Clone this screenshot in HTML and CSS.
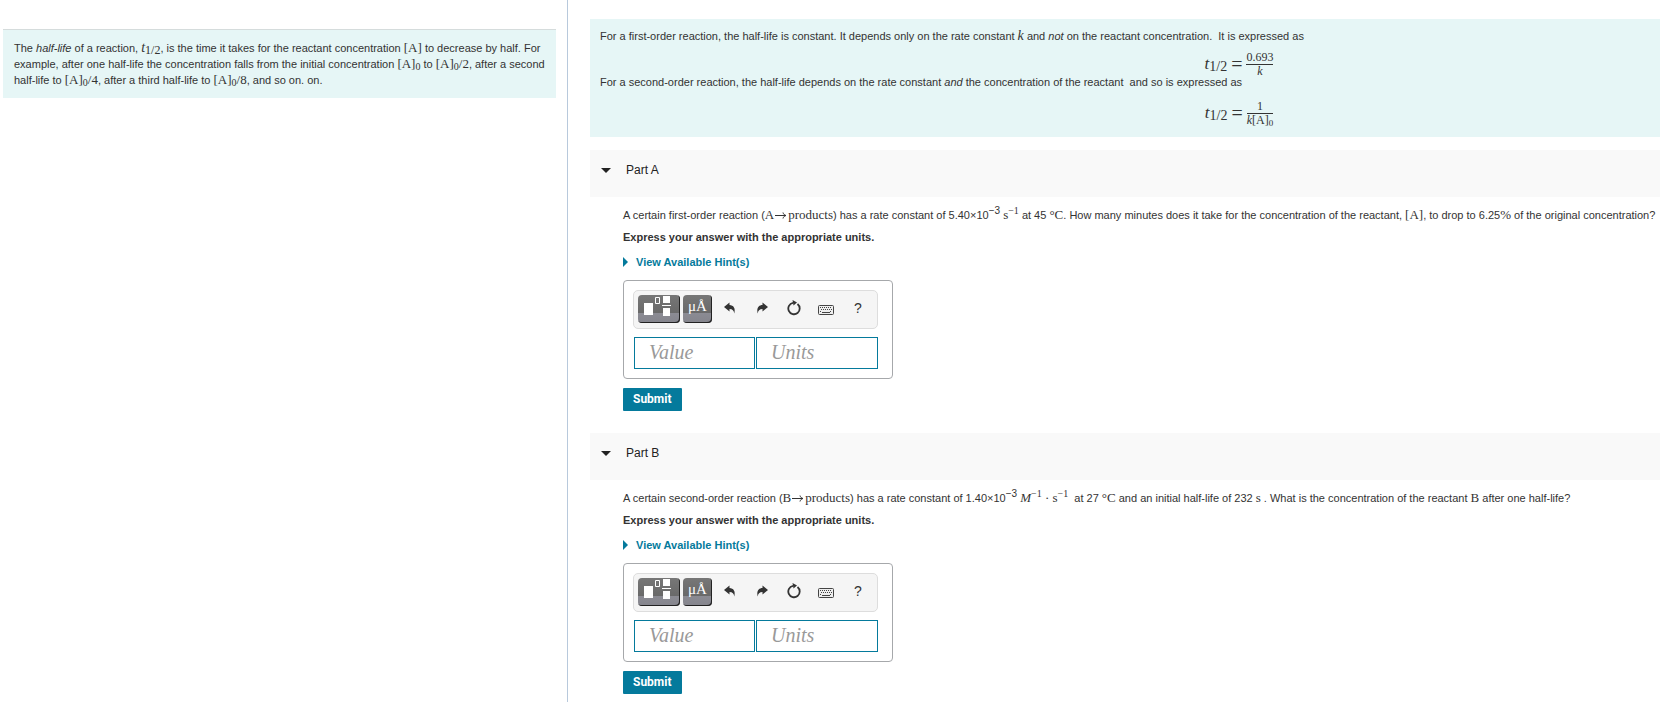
FILE: index.html
```html
<!DOCTYPE html>
<html lang="en">
<head>
  <meta charset="utf-8">
  <meta name="viewport" content="width=device-width">
  <title>Half-life</title>
  <link rel="stylesheet" href="styles.css">
</head>
<body>
  <!-- shared toolbar icons -->
  <svg class="defs" width="0" height="0" aria-hidden="true">
    <symbol id="i-templates" viewBox="0 0 42 28">
      <path fill="#fff" d="M6 8h9v12H6zM25 1h7v7h-7zM24 10h9v1h-9zM25 13h7v8h-7z"/>
      <path fill="none" stroke="#fff" d="M17.500 2.500h4v6h-4z"/>
    </symbol>
    <symbol id="i-undo" viewBox="0 0 12 12">
      <path fill="#333" d="M0 5L5.500 0.500V3C9.500 3 11.800 6.500 10.200 11.500C10 8.500 8.500 7 5.500 7V9.500Z"/>
    </symbol>
    <symbol id="i-reset" viewBox="0 0 14 16">
      <path fill="none" stroke="#333" stroke-width="1.800" d="M10.500 4A5.700 5.700 0 1 1 6 2.900"/>
      <path fill="#333" d="M5.500 0L10 2.500L6.500 5.500Z"/>
    </symbol>
    <symbol id="i-keyboard" viewBox="0 0 16 10">
      <rect x=".5" y=".5" width="15" height="9" rx="1" fill="#eee" stroke="#444"/>
      <path stroke="#444" stroke-dasharray="1 1" d="M2 2.500h12M3 4.500h11M2 6.500h2M12 6.500h2"/>
      <path stroke="#444" d="M4 7.500h8"/>
    </symbol>
  </svg>

  <div class="page">
    <aside class="side">
      <div class="note">
        The <i>half-life</i> of a reaction, <span class="m big"><i>t</i><sub>1/2</sub></span>, is the time it takes for the reactant concentration <span class="m">[A]</span> to decrease by half. For example, after one half-life the concentration falls from the initial concentration <span class="m">[A]<sub>0</sub></span> to <span class="m">[A]<sub>0</sub>/2</span>, after a second half-life to <span class="m">[A]<sub>0</sub>/4</span>, after a third half-life to <span class="m">[A]<sub>0</sub>/8</span>, and so on. on.
      </div>
    </aside>

    <main class="main">
      <div class="intro">
        <p>For a first-order reaction, the half-life is constant. It depends only on the rate constant <span class="m big"><i>k</i></span> and <i>not</i> on the reactant concentration.&nbsp; It is expressed as</p>
        <div class="eq">
          <span class="m lhs"><i>t</i><sub>1/2</sub></span><span class="m equals">=</span>
          <span class="m frac"><span class="num">0.693</span><span class="den"><i>k</i></span></span>
        </div>
        <p>For a second-order reaction, the half-life depends on the rate constant <i>and</i> the concentration of the reactant&nbsp; and so is expressed as</p>
        <div class="eq last">
          <span class="m lhs"><i>t</i><sub>1/2</sub></span><span class="m equals">=</span>
          <span class="m frac"><span class="num">1</span><span class="den"><i>k</i>[A]<sub>0</sub></span></span>
        </div>
      </div>

      <section class="part">
        <h2 class="part-head"><span class="caret"></span>Part A</h2>
        <div class="part-body">
          <p class="question">A certain first-order reaction (<span class="m">A<svg class="arrow" viewBox="0 0 12 7"><path d="M0 3.500h11M8 .5c.5 2 1.500 2.500 3 3c-1.500.5-2.500 1-3 3"/></svg>products</span>) has a rate constant of 5.40×10<sup>−3</sup> <span class="m">s<sup>−1</sup></span> at 45 <span class="m">°C</span>. How many minutes does it take for the concentration of the reactant, <span class="m">[A]</span>, to drop to 6.25<span class="m">%</span> of the original concentration?</p>
          <p class="express">Express your answer with the appropriate units.</p>
          <a class="hints" href="#">View Available Hint(s)</a>
          <div class="answer">
            <div class="tools">
              <button class="dark wide" type="button" aria-label="Templates"><svg width="42" height="28"><use href="#i-templates"/></svg></button>
              <button class="dark" type="button" aria-label="Symbols">μÅ</button>
              <button class="tool" type="button" aria-label="Undo"><svg width="12" height="12"><use href="#i-undo"/></svg></button>
              <button class="tool flip" type="button" aria-label="Redo"><svg width="12" height="12"><use href="#i-undo"/></svg></button>
              <button class="tool" type="button" aria-label="Reset"><svg width="14" height="16"><use href="#i-reset"/></svg></button>
              <button class="tool kbd" type="button" aria-label="Keyboard shortcuts"><svg width="16" height="10"><use href="#i-keyboard"/></svg></button>
              <button class="tool" type="button" aria-label="Help">?</button>
            </div>
            <div class="fields">
              <input type="text" placeholder="Value" aria-label="Value">
              <input type="text" placeholder="Units" aria-label="Units">
            </div>
          </div>
          <button class="submit" type="button">Submit</button>
        </div>
      </section>

      <section class="part">
        <h2 class="part-head"><span class="caret"></span>Part B</h2>
        <div class="part-body">
          <p class="question">A certain second-order reaction (<span class="m">B<svg class="arrow" viewBox="0 0 12 7"><path d="M0 3.500h11M8 .5c.5 2 1.500 2.500 3 3c-1.500.5-2.500 1-3 3"/></svg>products</span>) has a rate constant of 1.40×10<sup>−3</sup> <span class="m"><i>M</i><sup>−1</sup> · s<sup>−1</sup></span>&nbsp; at 27 <span class="m">°C</span> and an initial half-life of 232 <span class="m">s</span> . What is the concentration of the reactant <span class="m">B</span> after one half-life?</p>
          <p class="express">Express your answer with the appropriate units.</p>
          <a class="hints" href="#">View Available Hint(s)</a>
          <div class="answer">
            <div class="tools">
              <button class="dark wide" type="button" aria-label="Templates"><svg width="42" height="28"><use href="#i-templates"/></svg></button>
              <button class="dark" type="button" aria-label="Symbols">μÅ</button>
              <button class="tool" type="button" aria-label="Undo"><svg width="12" height="12"><use href="#i-undo"/></svg></button>
              <button class="tool flip" type="button" aria-label="Redo"><svg width="12" height="12"><use href="#i-undo"/></svg></button>
              <button class="tool" type="button" aria-label="Reset"><svg width="14" height="16"><use href="#i-reset"/></svg></button>
              <button class="tool kbd" type="button" aria-label="Keyboard shortcuts"><svg width="16" height="10"><use href="#i-keyboard"/></svg></button>
              <button class="tool" type="button" aria-label="Help">?</button>
            </div>
            <div class="fields">
              <input type="text" placeholder="Value" aria-label="Value">
              <input type="text" placeholder="Units" aria-label="Units">
            </div>
          </div>
          <button class="submit" type="button">Submit</button>
        </div>
      </section>
    </main>
  </div>
</body>
</html>
```
FILE: styles.css
```css
* { box-sizing: border-box; }
body {
  margin: 0;
  background: #fff;
  color: #333;
  font: 11px/16px "Liberation Sans", Arial, sans-serif;
}
p { margin: 0; }
sub, sup { line-height: 0; }
.defs { display: block; }

.page {
  display: grid;
  grid-template-columns: 568px 1fr;
  min-height: 100vh;
}
.side {
  padding: 29px 11px 0 3px;
  border-right: 1px solid #b8c9dc;
}
.note {
  padding: 10px 11px;
  border-top: 1px solid #d5dcdc;
  background: #e6f6f6;
}
.main {
  padding: 19px 0 8px 22px;
  min-width: 0;
}

/* math text */
.m {
  font-family: "Liberation Serif", "Times New Roman", serif;
  font-size: 13px;
  line-height: 0;
  white-space: nowrap;
}
.m sub, .m sup { font-size: 10px; }
.m sub { vertical-align: -2px; }
.m.big { font-size: 14px; }
.m.big sub { font-size: 12px; }
.arrow {
  width: 12px;
  height: 7px;
  margin: 0 1px;
  fill: none;
  stroke: #333;
}

.intro {
  height: 118px;
  padding: 9px 10px;
  background: #e6f6f6;
}
.eq {
  display: flex;
  align-items: center;
  justify-content: center;
  height: 28px;
  margin-top: 2px;
  padding: 8px 0 0 228px;
}
.eq.last {
  height: 42px;
  padding-top: 0;
}
.eq .lhs {
  font-size: 17px;
  line-height: 20px;
}
.eq .lhs sub { font-size: 14px; }
.eq .equals {
  margin: 0 4px;
  font-size: 20px;
}
.frac {
  display: flex;
  flex-direction: column;
  font-size: 12px;
  line-height: 13px;
  text-align: center;
}
.frac .num { border-bottom: 1px solid #333; }
.frac sub { font-size: 9px; }

.part { margin-top: 13px; }
.part + .part { margin-top: 22px; }
.part-head {
  display: flex;
  align-items: center;
  height: 47px;
  margin: 0;
  padding: 0 11px 7px;
  background: #f9f9f9;
  color: #222;
  font-size: 12px;
  font-weight: normal;
}
.caret {
  margin-right: 15px;
  border: 5px solid transparent;
  border-top-color: #222;
  border-bottom: 0;
}
.part-body { padding: 10px 0 0 33px; }
.question { white-space: nowrap; }
.question sup { font-size: 10px; }
.express {
  margin-top: 6px;
  font-weight: bold;
}
.hints {
  display: flex;
  align-items: center;
  margin-top: 9px;
  color: #047a9c;
  font-weight: bold;
  text-decoration: none;
}
.hints::before {
  content: "";
  margin-right: 8px;
  border: 5px solid transparent;
  border-left-color: #047a9c;
  border-right: 0;
}

.answer {
  width: 270px;
  height: 99px;
  margin-top: 10px;
  padding: 9px;
  border: 1px solid #a6a8ab;
  border-radius: 4px;
}
.tools {
  display: flex;
  align-items: center;
  width: 245px;
  height: 39px;
  padding: 0 4px 2px;
  border: 1px solid #ddd;
  border-radius: 5px;
  background: #f5f5f5;
}
.tools button {
  display: flex;
  align-items: center;
  justify-content: center;
  flex: none;
  padding: 0;
}
.tools .dark {
  width: 29px;
  height: 28px;
  margin-right: 2px;
  padding-bottom: 5px;
  border: 0;
  border-radius: 4px;
  background: linear-gradient(#777 0, #696969 18px, #8b8b93 18px, #85858d);
  box-shadow: inset -1px -1px #222;
  color: #fff;
  font: 15px/20px "Liberation Serif", serif;
}
.tools .wide {
  width: 42px;
  margin-right: 3px;
  padding: 0;
}
.tools .tool {
  width: 32px;
  height: 28px;
  padding-bottom: 2px;
  border: 0;
  background: none;
  color: #333;
  font: 14px/16px "Liberation Sans", Arial, sans-serif;
}
.flip svg { transform: scaleX(-1); }
.tools .kbd { padding: 2px 0 0; }
.fields {
  display: flex;
  gap: 1px;
  margin: 8px 0 0 1px;
}
.fields input {
  width: 121px;
  height: 32px;
  padding: 0 14px 2px;
  border: 1px solid #047a9c;
  font: italic 20px/28px "Liberation Serif", Georgia, serif;
}
.fields input + input { width: 122px; }
.fields input::placeholder { color: #999; }

.submit {
  display: block;
  height: 23px;
  margin-top: 9px;
  padding: 0 10px;
  border: 0;
  border-radius: 1px;
  background: #047a9c;
  color: #fff;
  font: bold 12px/23px Roboto, Arial, sans-serif;
}
```
